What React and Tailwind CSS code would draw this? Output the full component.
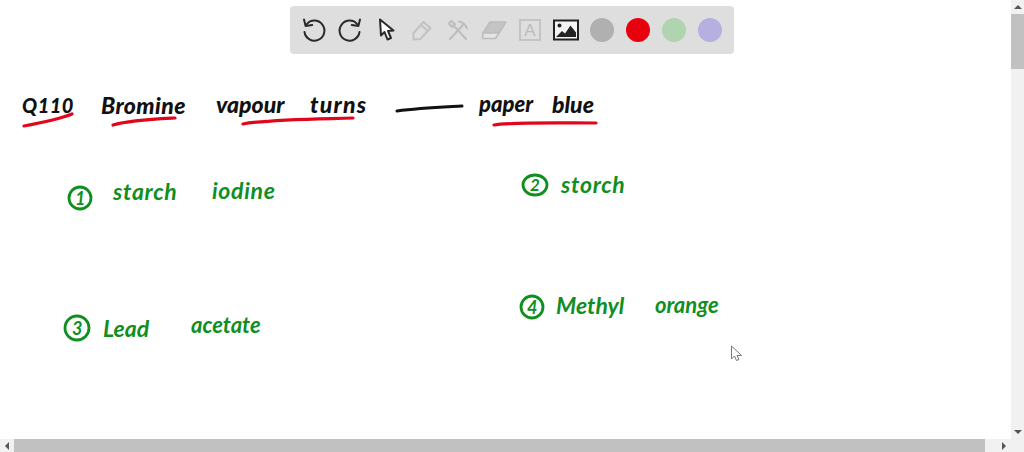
const hand = "font-['Lato','Noto_Sans',sans-serif] italic absolute leading-none whitespace-nowrap"

function Undo({ flip }) {
  return (
    <svg width="26" height="26" viewBox="0 0 26 26" fill="none" stroke="#2a2a2a" strokeWidth="2" strokeLinecap="round" strokeLinejoin="round" className={flip ? '-scale-x-100' : ''}>
      <path d="M5.5 7.5A10 10 0 1 1 3.5 15" />
      <path d="M3 2.5l1.6 6.6 6.6-1.2" />
    </svg>
  )
}

function Pointer() {
  return (
    <svg width="22" height="26" viewBox="0 0 22 26" fill="#fff" stroke="#2a2a2a" strokeWidth="2" strokeLinejoin="round" className="ml-[2px]">
      <path d="M4 2.500l1 16 3.500-3.500 3 7.500 3.500-1.500-3-7 5.500-0.500z" />
    </svg>
  )
}

function Pencil() {
  return (
    <svg width="24" height="24" viewBox="0 0 24 24" fill="none" stroke="#c2c2c2" strokeWidth="2" strokeLinejoin="round">
      <path d="M3.500 15L13.500 4l7 6-10 11-7 0.500z" />
      <path d="M11 7l7 6" />
    </svg>
  )
}

function Tools() {
  return (
    <svg width="24" height="24" viewBox="0 0 24 24" fill="none" stroke="#bdbdbd" strokeWidth="2" strokeLinecap="round" strokeLinejoin="round">
      <path d="M4 21L17 7" />
      <path d="M13 3.500c3 0.500 6.500 3 8 7" />
      <path d="M20 21L8 8" />
      <path d="M3 5.500l2.500-2.500 3.500 3-3 3z" />
    </svg>
  )
}

function Eraser() {
  return (
    <svg width="28" height="22" viewBox="0 0 28 22" fill="none" stroke="#bdbdbd" strokeWidth="1.600" strokeLinejoin="round">
      <path d="M10 3h16l-7 11H3z" fill="#c4c4c4" />
      <path d="M3 14h16l-3.500 5.500H2.500z" fill="#e4e4e4" />
    </svg>
  )
}

function ImageIcon() {
  return (
    <svg width="26" height="22" viewBox="0 0 26 22" fill="none">
      <rect x="1" y="1.500" width="24" height="19" stroke="#222" strokeWidth="2" fill="#f4f4f4" />
      <circle cx="6.500" cy="6.500" r="2" fill="#222" />
      <path d="M3 18l6-6 3 2.500 5.500-8 5.500 7v4.500z" fill="#222" />
    </svg>
  )
}

function Toolbar() {
  const dots = ['bg-[#b0b0b0]', 'bg-[#e8000f]', 'bg-[#b0d4b0]', 'bg-[#b5b0e0]']
  return (
    <div className="absolute top-[6px] left-[290px] w-[444px] h-12 flex items-center pl-[6px] rounded bg-[#dedede]">
      <div className="w-9 h-9 flex items-center justify-center"><Undo /></div>
      <div className="w-9 h-9 flex items-center justify-center"><Undo flip /></div>
      <div className="w-9 h-9 flex items-center justify-center"><Pointer /></div>
      <div className="w-9 h-9 flex items-center justify-center"><Pencil /></div>
      <div className="w-9 h-9 flex items-center justify-center"><Tools /></div>
      <div className="w-9 h-9 flex items-center justify-center"><Eraser /></div>
      <div className="w-9 h-9 flex items-center justify-center">
        <span className="w-[22px] h-[22px] flex items-center justify-center border-2 border-[#c4c4c4] text-[#bcbcbc] text-[17px] leading-none font-['Liberation_Sans',sans-serif]">A</span>
      </div>
      <div className="w-9 h-9 flex items-center justify-center"><ImageIcon /></div>
      {dots.map(d => (
        <div key={d} className="w-9 h-9 flex items-center justify-center">
          <span className={`w-6 h-6 rounded-full ${d}`} />
        </div>
      ))}
    </div>
  )
}

function Strokes() {
  return (
    <svg width="1011" height="439" className="absolute left-0 top-0" fill="none" strokeLinecap="round" strokeLinejoin="round">
      <g stroke="#e0061c" strokeWidth="3.200">
        <path d="M24 126C40 123 60 119 72 114" />
        <path d="M113 125C130 120 155 119 175 118" />
        <path d="M243 124C270 119 320 119 353 118" />
        <path d="M494 125C510 122 560 123 596 123" />
      </g>
      <path d="M397 111C420 108 445 107 462 106" stroke="#111" strokeWidth="3" />
      <g stroke="#0f8f1f" strokeWidth="2.800">
        <circle cx="80" cy="198" r="11" />
        <ellipse cx="535" cy="185" rx="12" ry="10" />
        <circle cx="77" cy="328" r="12" />
        <circle cx="532" cy="307" r="11" />
      </g>
    </svg>
  )
}

function Cursor() {
  return (
    <svg width="12" height="17" viewBox="0 0 12 17" className="absolute left-[730px] top-[345px]" fill="#fff" stroke="#777" strokeWidth="1">
      <path d="M1.500 1v13l3-3 2 4.500 2.500-1-2-4h4.500z" />
    </svg>
  )
}

function Board() {
  return (
    <div className="relative flex-1 bg-white overflow-hidden">
      <Strokes />
      <Toolbar />

      <span className={`${hand} left-[22px] top-[95px] text-[20px] tracking-[0.5px] font-black text-[#111]`}>Q110</span>
      <span className={`${hand} left-[101px] top-[94px] text-[23px] tracking-[0.4px] font-black text-[#111]`}>Bromine</span>
      <span className={`${hand} left-[216px] top-[93px] text-[23px] font-black text-[#111]`}>vapour</span>
      <span className={`${hand} left-[310px] top-[93px] text-[23px] tracking-[1.200px] font-black text-[#111]`}>turns</span>
      <span className={`${hand} left-[479px] top-[93px] text-[22px] font-black text-[#111]`}>paper</span>
      <span className={`${hand} left-[552px] top-[93px] text-[23px] font-black text-[#111]`}>blue</span>

      <span className={`${hand} left-[75px] top-[189px] text-[18px] font-bold text-[#0f8f1f]`}>1</span>
      <span className={`${hand} left-[113px] top-[180px] text-[23px] tracking-[0.7px] font-bold text-[#0f8f1f]`}>starch</span>
      <span className={`${hand} left-[212px] top-[179px] text-[23px] tracking-[0.7px] font-bold text-[#0f8f1f]`}>iodine</span>

      <span className={`${hand} left-[530px] top-[176px] text-[17px] font-bold text-[#0f8f1f]`}>2</span>
      <span className={`${hand} left-[561px] top-[173px] text-[23px] tracking-[0.7px] font-bold text-[#0f8f1f]`}>storch</span>

      <span className={`${hand} left-[72px] top-[319px] text-[18px] font-bold text-[#0f8f1f]`}>3</span>
      <span className={`${hand} left-[103px] top-[317px] text-[23px] font-bold text-[#0f8f1f]`}>Lead</span>
      <span className={`${hand} left-[191px] top-[314px] text-[22px] font-bold text-[#0f8f1f]`}>acetate</span>

      <span className={`${hand} left-[527px] top-[298px] text-[18px] font-bold text-[#0f8f1f]`}>4</span>
      <span className={`${hand} left-[556px] top-[294px] text-[23px] font-bold text-[#0f8f1f]`}>Methyl</span>
      <span className={`${hand} left-[655px] top-[294px] text-[22px] font-bold text-[#0f8f1f]`}>orange</span>

      <Cursor />
    </div>
  )
}

function ArrowUp() {
  return <span className="w-0 h-0 border-x-[4px] border-x-transparent border-b-[4px] border-b-[#555]" />
}

function ArrowDown() {
  return <span className="w-0 h-0 border-x-[4px] border-x-transparent border-t-[4px] border-t-[#555]" />
}

function ArrowLeft() {
  return <span className="w-0 h-0 border-y-[4px] border-y-transparent border-r-[4px] border-r-[#555]" />
}

function ArrowRight() {
  return <span className="w-0 h-0 border-y-[4px] border-y-transparent border-l-[4px] border-l-[#555]" />
}

export default function App() {
  return (
    <div className="w-[1024px] h-[452px] flex flex-col overflow-hidden bg-[#f1f1f1]">
      <div className="flex flex-1 min-h-0">
        <Board />
        {/* vertical scrollbar */}
        <div className="w-[13px] flex flex-col bg-[#f1f1f1]">
          <div className="h-[14px] flex items-center justify-center"><ArrowUp /></div>
          <div className="h-[55px] bg-[#c1c1c1]" />
          <div className="flex-1" />
          <div className="h-[14px] flex items-center justify-center"><ArrowDown /></div>
        </div>
      </div>
      {/* horizontal scrollbar */}
      <div className="h-[13px] flex bg-[#f1f1f1]">
        <div className="w-[14px] flex items-center justify-center"><ArrowLeft /></div>
        <div className="w-[971px] bg-[#c1c1c1]" />
        <div className="w-[26px] flex items-center justify-end pr-[5px]"><ArrowRight /></div>
      </div>
    </div>
  )
}
